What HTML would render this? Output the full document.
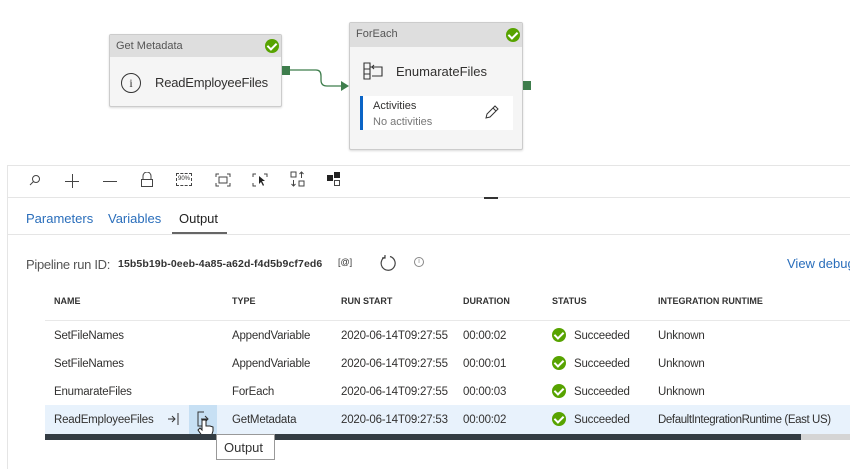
<!DOCTYPE html>
<html><head><style>
*{margin:0;padding:0;box-sizing:border-box}
body{width:850px;height:469px;background:#fff;font-family:"Liberation Sans",sans-serif;position:relative;overflow:hidden;color:#323130}
div{white-space:nowrap}
.a{position:absolute}
.box{position:absolute;background:#f5f5f5;border:1px solid #ccc;border-radius:2px;box-shadow:0 1px 2px rgba(0,0,0,.15)}
.hd{background:#dedede;height:22px;font-size:11px;color:#555;padding:5px 6px}
.chk{position:absolute;width:14px;height:14px;border-radius:50%;background:#57a300}
.chk:after{content:"";position:absolute;left:4px;top:2px;width:4px;height:7px;border:solid #fff;border-width:0 2px 2px 0;transform:rotate(45deg)}
.th{position:absolute;top:296px;font-size:9px;font-weight:bold;color:#333}
.td{position:absolute;font-size:11.5px;color:#323130;letter-spacing:-0.2px;margin-top:2px}
.tb{position:absolute;top:172px;font-size:13px;color:#444}
</style></head><body>
<div class="box" style="left:109px;top:34px;width:173px;height:73px">
<div class="hd">Get Metadata</div>
<div class="chk" style="left:155px;top:4px"></div>
<div class="a" style="left:11px;top:38px;width:20px;height:20px;border:1.3px solid #333;border-radius:50%;font-size:12px;text-align:center;line-height:18px;font-family:'Liberation Serif'">i</div>
<div class="a" style="left:45px;top:40px;font-size:13px;letter-spacing:-0.2px">ReadEmployeeFiles</div>
</div>
<div class="a" style="left:282px;top:66px;width:8px;height:9px;background:#3e7d4c"></div>
<svg class="a" style="left:289px;top:64px" width="64" height="28"><path d="M1 6 H27 Q32 6 32 12 V16 Q32 22 38 22 H52" stroke="#3e7d4c" stroke-width="1.3" fill="none"/><path d="M52 17 L60 22 L52 27Z" fill="#3e7d4c"/></svg>
<div class="box" style="left:349px;top:22px;width:174px;height:128px">
<div class="hd" style="height:24px">ForEach</div>
<div class="chk" style="left:156px;top:5px"></div>
<svg class="a" style="left:13px;top:39px" width="22" height="18"><path d="M1 1h6v16H1zM1 7h6M1 12h6M7 5h12v9H9M11 3L9 5l2 2" stroke="#333" stroke-width="1.1" fill="none"/></svg>
<div class="a" style="left:46px;top:41px;font-size:13px">EnumarateFiles</div>
<div class="a" style="left:10px;top:73px;width:153px;height:34px;background:#fff;border-left:3px solid #0a64c6">
<div class="a" style="left:10px;top:4px;font-size:11px">Activities</div>
<div class="a" style="left:10px;top:20px;font-size:11px;color:#777">No activities</div>
<svg class="a" style="left:121px;top:8px" width="16" height="16"><path d="M2 14l1-4 8-8 3 3-8 8z M9 4l3 3" stroke="#333" fill="none"/></svg>
</div>
</div>
<div class="a" style="left:523px;top:81px;width:8px;height:9px;background:#3e7d4c"></div>
<div class="a" style="left:7px;top:165px;width:843px;height:1px;background:#e5e5e5"></div>
<div class="a" style="left:7px;top:165px;width:1px;height:304px;background:#e5e5e5"></div>
<div class="a" style="left:7px;top:197px;width:843px;height:1px;background:#e5e5e5"></div>
<div class="a" style="left:484px;top:197px;width:14px;height:2px;background:#333"></div>
<svg class="a" style="left:29px;top:174px" width="12" height="12"><circle cx="7" cy="5" r="3.5" stroke="#444" fill="none"/><path d="M4.5 7.5L1 11" stroke="#444"/></svg>
<div class="a" style="left:65px;top:181px;width:14px;height:1px;background:#444"></div>
<div class="a" style="left:71.5px;top:174px;width:1px;height:14px;background:#444"></div>
<div class="a" style="left:103px;top:181px;width:14px;height:1px;background:#444"></div>
<svg class="a" style="left:140px;top:172px" width="14" height="16"><path d="M3 7V4a4 4 0 0 1 8 0v3M1.5 7.5h11v7h-11z" stroke="#444" fill="none"/></svg>
<div class="a" style="left:176px;top:173px;width:16px;height:13px;border:1px dashed #444;font-size:6px;text-align:center;line-height:11px">90%</div>
<svg class="a" style="left:215px;top:173px" width="16" height="14"><path d="M1 4V1h3M12 1h3v3M15 10v3h-3M4 13H1v-3" stroke="#444" fill="none"/><rect x="4" y="4" width="8" height="6" stroke="#444" fill="none"/></svg>
<svg class="a" style="left:252px;top:173px" width="16" height="14"><path d="M1 4V1h3M12 1h3v3M4 13H1v-3" stroke="#444" fill="none"/><path d="M7 3l6 5-3 0 2 4-1 1-2-4-2 2z" fill="#222"/></svg>
<svg class="a" style="left:290px;top:171px" width="16" height="17"><rect x="1" y="1" width="5" height="5" stroke="#444" fill="none"/><rect x="9" y="10" width="5" height="5" stroke="#444" fill="none"/><path d="M11.5 7V1M9.5 3l2-2 2 2M3.5 9v6M1.5 13l2 2 2-2" stroke="#444" fill="none"/></svg>
<svg class="a" style="left:326px;top:172px" width="16" height="16"><rect x="1" y="3" width="6" height="6" fill="#222"/><rect x="8" y="0" width="6" height="6" fill="#222"/><rect x="8.5" y="8.5" width="5" height="5" stroke="#444" fill="none"/></svg>
<div class="a" style="left:26px;top:211px;font-size:13px;color:#2a6ebb">Parameters</div>
<div class="a" style="left:108px;top:211px;font-size:13px;color:#2a6ebb">Variables</div>
<div class="a" style="left:179px;top:211px;font-size:13px;color:#222">Output</div>
<div class="a" style="left:172px;top:232px;width:55px;height:2px;background:#666"></div>
<div class="a" style="left:7px;top:234px;width:843px;height:1px;background:#e5e5e5"></div>
<div class="a" style="left:26px;top:257px;font-size:13px;color:#555;letter-spacing:-0.3px">Pipeline run ID:</div>
<div class="a" style="left:118px;top:258px;font-size:10.5px;font-weight:bold;color:#333;letter-spacing:0.1px">15b5b19b-0eeb-4a85-a62d-f4d5b9cf7ed6</div>
<div class="a" style="left:338px;top:257px;font-size:9px;color:#333">[@]</div>
<svg class="a" style="left:379px;top:254px" width="18" height="18"><path d="M6 3A7 7 0 1 0 11 2.5" stroke="#444" stroke-width="1.2" fill="none"/><path d="M6 1v3H3" stroke="#444" stroke-width="1.2" fill="none"/></svg>
<div class="a" style="left:414px;top:257px;width:10px;height:10px;border:1px solid #888;border-radius:50%;font-size:7px;text-align:center;line-height:8px;color:#888">i</div>
<div class="a" style="left:787px;top:256px;font-size:13px;color:#2a6ebb">View debug</div>
<div class="th" style="left:54px">NAME</div><div class="th" style="left:232px">TYPE</div><div class="th" style="left:341px">RUN START</div><div class="th" style="left:463px">DURATION</div><div class="th" style="left:552px">STATUS</div><div class="th" style="left:658px">INTEGRATION RUNTIME</div>
<div class="a" style="left:45px;top:320px;width:805px;height:1px;background:#e8e8e8"></div>
<div class="a" style="left:45px;top:405px;width:805px;height:29px;background:#e8f2fc"></div>
<div class="a" style="left:189px;top:405px;width:28px;height:29px;background:#c7e0f4"></div>

<div class="td" style="left:54px;top:328px">SetFileNames</div><div class="td" style="left:232px;top:328px">AppendVariable</div><div class="td" style="left:341px;top:328px">2020-06-14T09:27:55</div><div class="td" style="left:463px;top:328px">00:00:02</div><div class="chk" style="left:552px;top:328px"></div><div class="td" style="left:574px;top:328px">Succeeded</div><div class="td" style="left:658px;top:328px">Unknown</div>
<div class="td" style="left:54px;top:356px">SetFileNames</div><div class="td" style="left:232px;top:356px">AppendVariable</div><div class="td" style="left:341px;top:356px">2020-06-14T09:27:55</div><div class="td" style="left:463px;top:356px">00:00:01</div><div class="chk" style="left:552px;top:356px"></div><div class="td" style="left:574px;top:356px">Succeeded</div><div class="td" style="left:658px;top:356px">Unknown</div>
<div class="td" style="left:54px;top:384px">EnumarateFiles</div><div class="td" style="left:232px;top:384px">ForEach</div><div class="td" style="left:341px;top:384px">2020-06-14T09:27:55</div><div class="td" style="left:463px;top:384px">00:00:03</div><div class="chk" style="left:552px;top:384px"></div><div class="td" style="left:574px;top:384px">Succeeded</div><div class="td" style="left:658px;top:384px">Unknown</div>
<div class="td" style="left:54px;top:412px">ReadEmployeeFiles</div><div class="td" style="left:232px;top:412px">GetMetadata</div><div class="td" style="left:341px;top:412px">2020-06-14T09:27:53</div><div class="td" style="left:463px;top:412px">00:00:02</div><div class="chk" style="left:552px;top:412px"></div><div class="td" style="left:574px;top:412px">Succeeded</div><div class="td" style="left:658px;top:412px;letter-spacing:-0.4px">DefaultIntegrationRuntime (East US)</div>
<svg class="a" style="left:167px;top:412px" width="14" height="14"><path d="M1 7h7M5 4l3 3-3 3M11 1v12" stroke="#333" fill="none"/></svg>
<svg class="a" style="left:196px;top:411px" width="14" height="16"><path d="M8 1H2v14h6M5 8h7M9 5l3 3-3 3" stroke="#333" fill="none"/></svg>
<svg class="a" style="left:197px;top:418px" width="18" height="22"><path d="M5 2v10l-2-2-2 2 5 7h8l2-6v-4l-3-1-2 0-1 0-1 0V2z" fill="#fff" stroke="#222" stroke-width="1"/></svg>
<div class="a" style="left:45px;top:434px;width:756px;height:6px;background:#333c43"></div>
<div class="a" style="left:801px;top:434px;width:49px;height:6px;background:#d5d5d5"></div>
<div class="a" style="left:216px;top:434px;width:59px;height:26px;background:#fff;border:1px solid #999;font-size:13px;padding:5px 7px;color:#333">Output</div>
</body></html>
